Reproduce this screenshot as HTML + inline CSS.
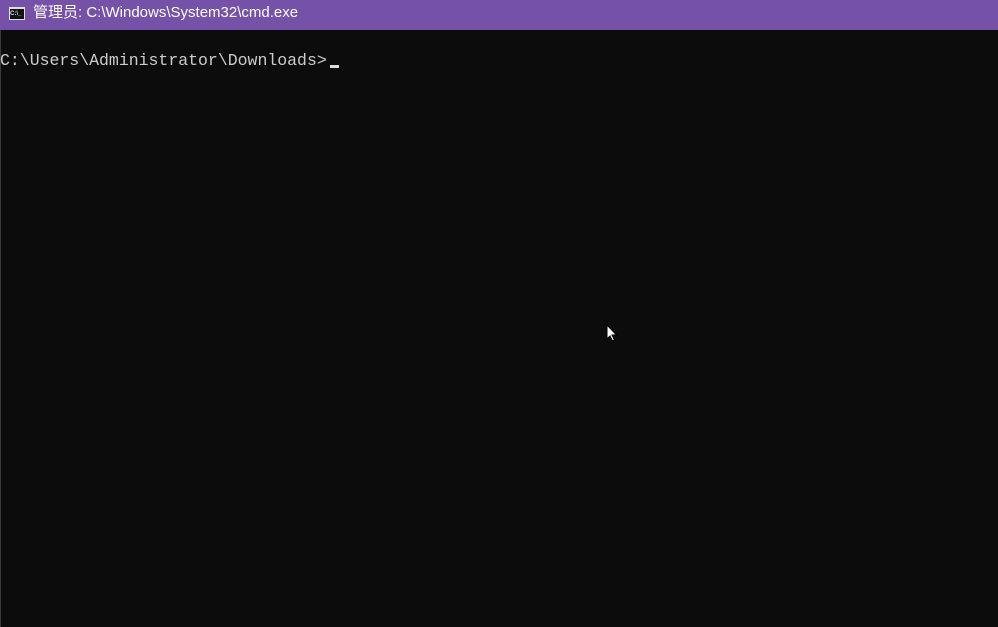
<!DOCTYPE html>
<html><head><meta charset="utf-8"><style>
html,body{margin:0;padding:0;width:998px;height:627px;overflow:hidden;background:#0c0c0c;}
.tb{position:absolute;left:0;top:0;width:998px;height:30px;background:#7551a8;}
.ic{position:absolute;left:9px;top:7px;width:16px;height:13px;background:#ddd;}
.ic div{position:absolute;left:1px;top:2px;width:14px;height:10px;background:#111;color:#ddd;font:bold 6px "Liberation Sans",sans-serif;line-height:10px;}
.tt{position:absolute;left:33px;top:3px;color:#fff;font:15px "Liberation Sans","Noto Sans CJK SC",sans-serif;line-height:20px;}
.pr{position:absolute;left:0;top:50px;color:#cccccc;font:16.5px "Liberation Mono",monospace;line-height:22px;white-space:pre;}
.cur{position:absolute;left:330px;top:65px;width:9px;height:3px;background:#ddd;}
.l{position:absolute;left:0;top:30px;width:1px;height:597px;background:#3a3a3a;}
</style></head><body>
<div class="tb"><div class="ic"><div>C:\_</div></div><div class="tt">管理员: C:\Windows\System32\cmd.exe</div></div>
<div class="l"></div>
<div class="pr">C:\Users\Administrator\Downloads&gt;</div>
<div class="cur"></div>
<svg style="position:absolute;left:606px;top:324px" width="12" height="19" viewBox="0 0 12 19"><path d="M1 1 L1 15 L4 12 L6.5 17 L8.5 16 L6 11 L10.5 11 Z" fill="#fff" stroke="#000" stroke-width="1"/></svg>
</body></html>
